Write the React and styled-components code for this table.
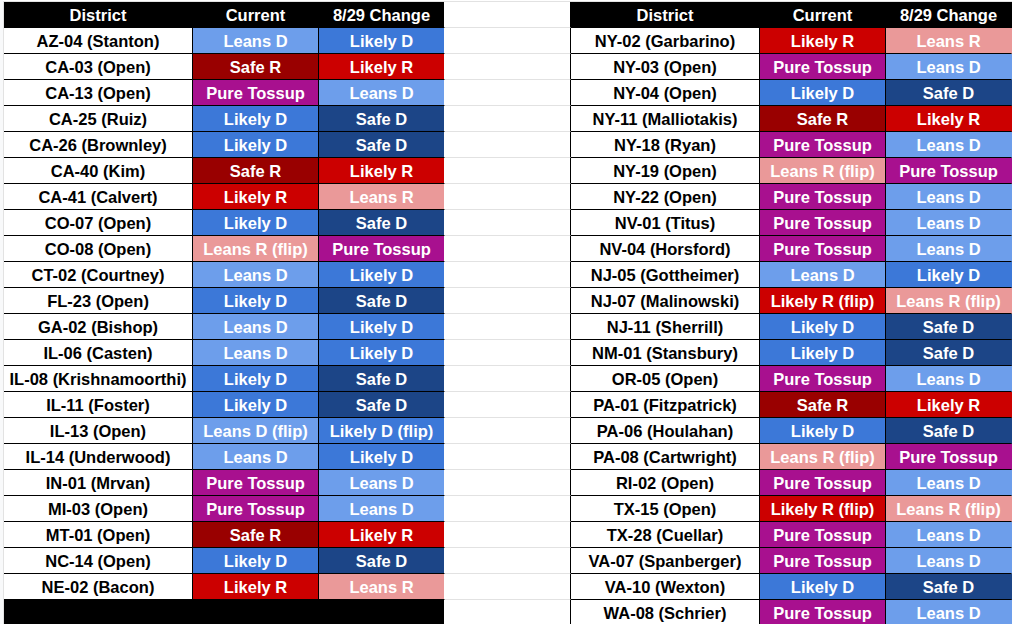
import React from 'react';
import styled, { createGlobalStyle } from 'styled-components';

const GlobalStyle = createGlobalStyle`
  html, body {
    margin: 0;
    padding: 0;
    background: #fff;
  }
  body {
    font-family: "Liberation Sans", Arial, sans-serif;
    overflow: hidden;
  }
`;

const RATING_COLORS = {
  'Leans D': '#6d9eeb',
  'Likely D': '#3c78d8',
  'Safe D': '#1c4587',
  'Leans R': '#ea9999',
  'Likely R': '#cc0000',
  'Safe R': '#990000',
  'Pure Tossup': '#a8108f',
};

const colorFor = (rating) => RATING_COLORS[rating.replace(' (flip)', '')];

const LEFT = [
  ['AZ-04 (Stanton)', 'Leans D', 'Likely D'],
  ['CA-03 (Open)', 'Safe R', 'Likely R'],
  ['CA-13 (Open)', 'Pure Tossup', 'Leans D'],
  ['CA-25 (Ruiz)', 'Likely D', 'Safe D'],
  ['CA-26 (Brownley)', 'Likely D', 'Safe D'],
  ['CA-40 (Kim)', 'Safe R', 'Likely R'],
  ['CA-41 (Calvert)', 'Likely R', 'Leans R'],
  ['CO-07 (Open)', 'Likely D', 'Safe D'],
  ['CO-08 (Open)', 'Leans R (flip)', 'Pure Tossup'],
  ['CT-02 (Courtney)', 'Leans D', 'Likely D'],
  ['FL-23 (Open)', 'Likely D', 'Safe D'],
  ['GA-02 (Bishop)', 'Leans D', 'Likely D'],
  ['IL-06 (Casten)', 'Leans D', 'Likely D'],
  ['IL-08 (Krishnamoorthi)', 'Likely D', 'Safe D'],
  ['IL-11 (Foster)', 'Likely D', 'Safe D'],
  ['IL-13 (Open)', 'Leans D (flip)', 'Likely D (flip)'],
  ['IL-14 (Underwood)', 'Leans D', 'Likely D'],
  ['IN-01 (Mrvan)', 'Pure Tossup', 'Leans D'],
  ['MI-03 (Open)', 'Pure Tossup', 'Leans D'],
  ['MT-01 (Open)', 'Safe R', 'Likely R'],
  ['NC-14 (Open)', 'Likely D', 'Safe D'],
  ['NE-02 (Bacon)', 'Likely R', 'Leans R'],
];

const RIGHT = [
  ['NY-02 (Garbarino)', 'Likely R', 'Leans R'],
  ['NY-03 (Open)', 'Pure Tossup', 'Leans D'],
  ['NY-04 (Open)', 'Likely D', 'Safe D'],
  ['NY-11 (Malliotakis)', 'Safe R', 'Likely R'],
  ['NY-18 (Ryan)', 'Pure Tossup', 'Leans D'],
  ['NY-19 (Open)', 'Leans R (flip)', 'Pure Tossup'],
  ['NY-22 (Open)', 'Pure Tossup', 'Leans D'],
  ['NV-01 (Titus)', 'Pure Tossup', 'Leans D'],
  ['NV-04 (Horsford)', 'Pure Tossup', 'Leans D'],
  ['NJ-05 (Gottheimer)', 'Leans D', 'Likely D'],
  ['NJ-07 (Malinowski)', 'Likely R (flip)', 'Leans R (flip)'],
  ['NJ-11 (Sherrill)', 'Likely D', 'Safe D'],
  ['NM-01 (Stansbury)', 'Likely D', 'Safe D'],
  ['OR-05 (Open)', 'Pure Tossup', 'Leans D'],
  ['PA-01 (Fitzpatrick)', 'Safe R', 'Likely R'],
  ['PA-06 (Houlahan)', 'Likely D', 'Safe D'],
  ['PA-08 (Cartwright)', 'Leans R (flip)', 'Pure Tossup'],
  ['RI-02 (Open)', 'Pure Tossup', 'Leans D'],
  ['TX-15 (Open)', 'Likely R (flip)', 'Leans R (flip)'],
  ['TX-28 (Cuellar)', 'Pure Tossup', 'Leans D'],
  ['VA-07 (Spanberger)', 'Pure Tossup', 'Leans D'],
  ['VA-10 (Wexton)', 'Likely D', 'Safe D'],
  ['WA-08 (Schrier)', 'Pure Tossup', 'Leans D'],
];

const Page = styled.div`
  display: flex;
  align-items: flex-start;
  height: 624px;
`;

const RowHeaderStrip = styled.div`
  width: 3px;
  height: 100%;
  background: #f8f9fa;
`;

const Sheet = styled.div`
  display: grid;
  grid-template-columns: 189px 126px 126px 126px 189px 126px 126px;
  grid-auto-rows: 26px;
  margin-top: 1px;
  border-top: 1px solid #e2e2e2;
  border-left: 1px solid #e2e2e2;
`;

const Cell = styled.div`
  box-sizing: border-box;
  display: flex;
  align-items: center;
  justify-content: center;
  padding-top: 2px;
  border-right: 1px solid #000;
  border-bottom: 1px solid #000;
  font-size: 16.5px;
  font-weight: 700;
  white-space: nowrap;
  overflow: hidden;
  ${({ $edge }) => $edge && `border-right-color: ${$edge};`}
`;

const HeaderCell = styled(Cell)`
  background: #000;
  color: #fff;
`;

const NameCell = styled(Cell)`
  background: #fff;
  color: #000;
`;

const RatingCell = styled(Cell)`
  background: ${({ $color }) => $color};
  color: #fff;
`;

const FooterCell = styled(Cell)`
  grid-column: span 3;
  background: #000;
`;

const GapCell = styled.div`
  box-sizing: border-box;
  background: #fff;
  border-bottom: 1px solid #e2e2e2;
  border-right: 1px solid #000;
`;

function HeaderRow({ edge }) {
  return (
    <>
      <HeaderCell>District</HeaderCell>
      <HeaderCell>Current</HeaderCell>
      <HeaderCell $edge={edge}>8/29 Change</HeaderCell>
    </>
  );
}

function RaceRow({ race, edge }) {
  const [district, current, change] = race;
  return (
    <>
      <NameCell>{district}</NameCell>
      <RatingCell $color={colorFor(current)}>{current}</RatingCell>
      <RatingCell $color={colorFor(change)} $edge={edge}>
        {change}
      </RatingCell>
    </>
  );
}

export default function App() {
  const rows = RIGHT.length;
  return (
    <>
      <GlobalStyle />
      <Page>
        <RowHeaderStrip />
        <Sheet>
          <HeaderRow edge="#fff" />
          <GapCell />
          <HeaderRow edge="transparent" />
          {Array.from({ length: rows }, (_, i) => (
            <React.Fragment key={i}>
              {LEFT[i] ? (
                <RaceRow race={LEFT[i]} edge="#fff" />
              ) : (
                <FooterCell $edge="#fff" />
              )}
              <GapCell />
              <RaceRow race={RIGHT[i]} edge="transparent" />
            </React.Fragment>
          ))}
        </Sheet>
      </Page>
    </>
  );
}
